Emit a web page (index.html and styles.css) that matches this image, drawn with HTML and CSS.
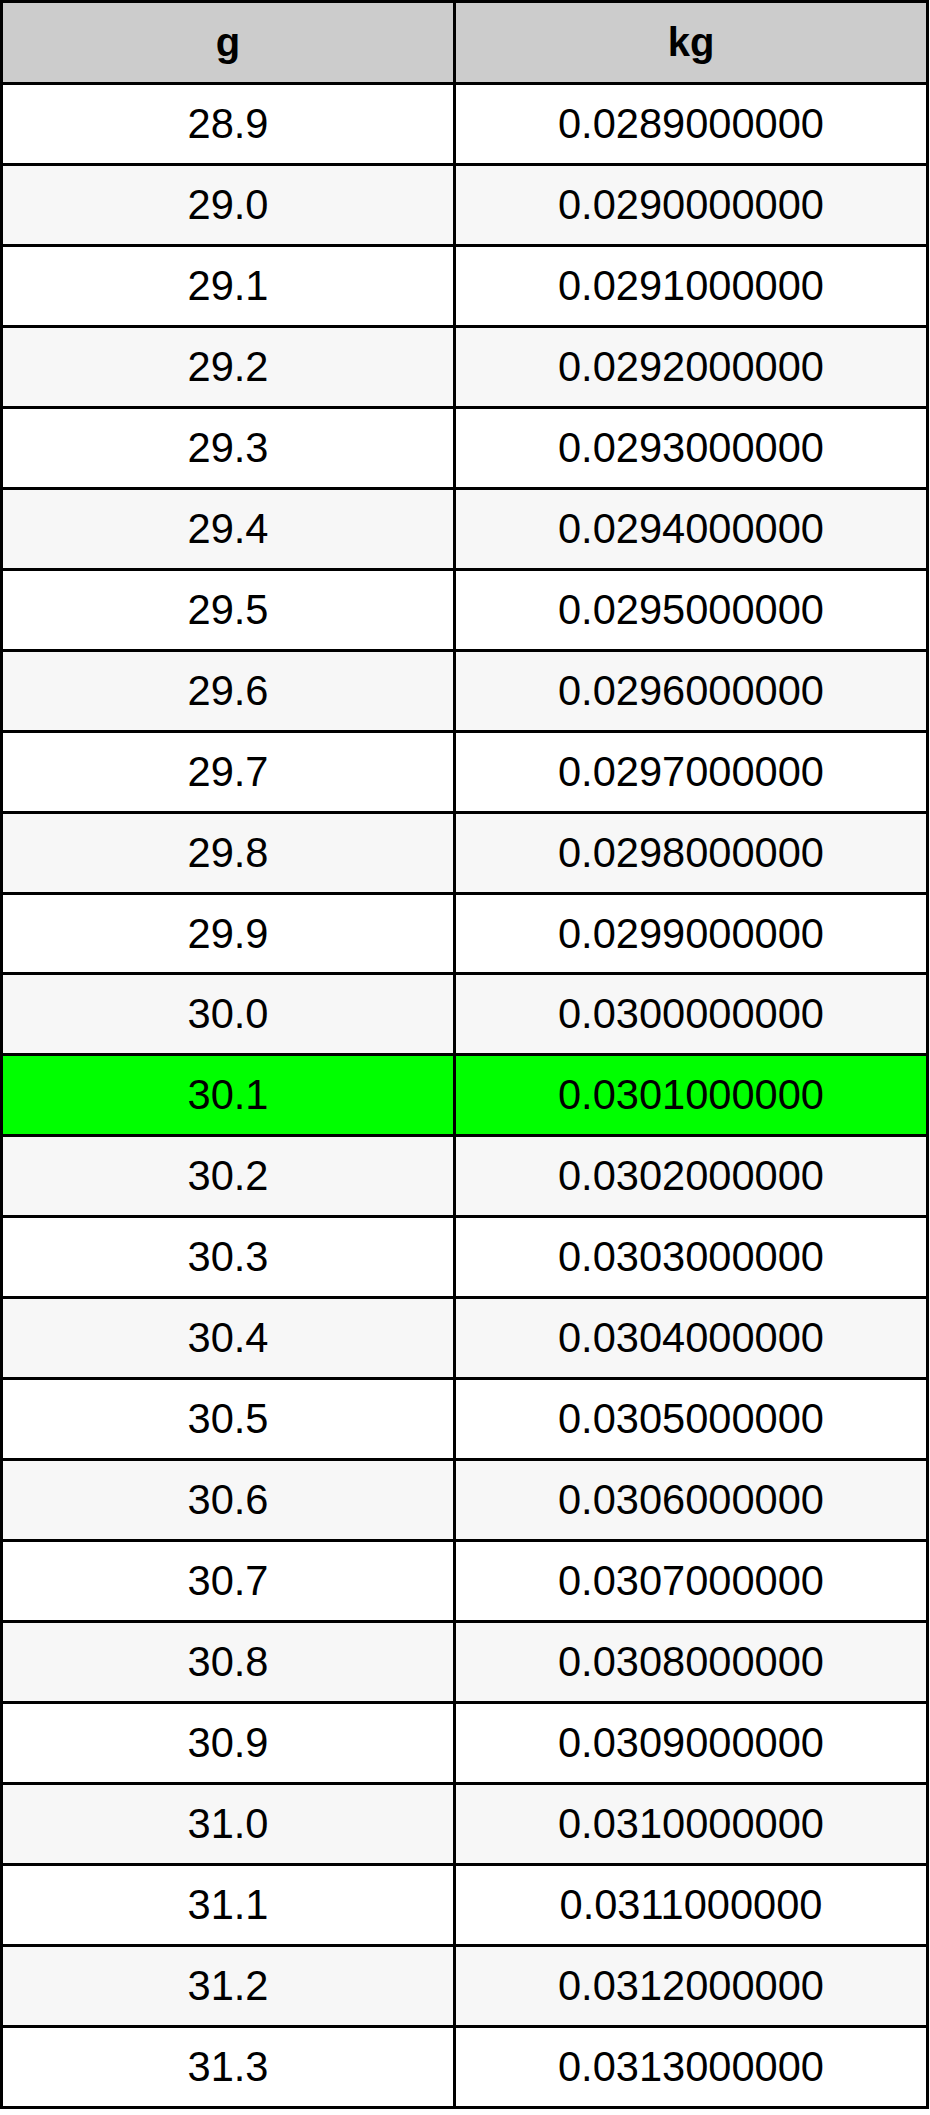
FILE: index.html
```html
<!DOCTYPE html>
<html>
<head>
<meta charset="utf-8">
<title>g to kg</title>
<link rel="stylesheet" href="styles.css">
</head>
<body>
<table class="conv">
  <thead>
    <tr class="head"><th class="c1">g</th><th class="c2">kg</th></tr>
  </thead>
  <tbody>
    <tr><td>28.9</td><td>0.0289000000</td></tr>
    <tr class="alt"><td>29.0</td><td>0.0290000000</td></tr>
    <tr><td>29.1</td><td>0.0291000000</td></tr>
    <tr class="alt"><td>29.2</td><td>0.0292000000</td></tr>
    <tr><td>29.3</td><td>0.0293000000</td></tr>
    <tr class="alt"><td>29.4</td><td>0.0294000000</td></tr>
    <tr><td>29.5</td><td>0.0295000000</td></tr>
    <tr class="alt"><td>29.6</td><td>0.0296000000</td></tr>
    <tr><td>29.7</td><td>0.0297000000</td></tr>
    <tr class="alt"><td>29.8</td><td>0.0298000000</td></tr>
    <tr><td>29.9</td><td>0.0299000000</td></tr>
    <tr class="alt"><td>30.0</td><td>0.0300000000</td></tr>
    <tr class="hl"><td>30.1</td><td>0.0301000000</td></tr>
    <tr class="alt"><td>30.2</td><td>0.0302000000</td></tr>
    <tr><td>30.3</td><td>0.0303000000</td></tr>
    <tr class="alt"><td>30.4</td><td>0.0304000000</td></tr>
    <tr><td>30.5</td><td>0.0305000000</td></tr>
    <tr class="alt"><td>30.6</td><td>0.0306000000</td></tr>
    <tr><td>30.7</td><td>0.0307000000</td></tr>
    <tr class="alt"><td>30.8</td><td>0.0308000000</td></tr>
    <tr><td>30.9</td><td>0.0309000000</td></tr>
    <tr class="alt"><td>31.0</td><td>0.0310000000</td></tr>
    <tr><td>31.1</td><td>0.0311000000</td></tr>
    <tr class="alt"><td>31.2</td><td>0.0312000000</td></tr>
    <tr><td>31.3</td><td>0.0313000000</td></tr>
  </tbody>
</table>
</body>
</html>
```
FILE: styles.css
```css
html, body {
  margin: 0;
  padding: 0;
  background: #ffffff;
}

.conv {
  border-collapse: separate;
  border-spacing: 0;
  table-layout: fixed;
  width: 929px;
  border-top: 3px solid #000;
  border-left: 3px solid #000;
  font-family: "Liberation Sans", Arial, sans-serif;
  color: #000;
}

.conv th,
.conv td {
  box-sizing: border-box;
  padding: 0;
  text-align: center;
  vertical-align: middle;
  border-right: 3px solid #000;
  border-bottom: 3px solid #000;
}

.conv .c1 { width: 453px; }
.conv .c2 { width: 473px; }

.head {
  height: 82px;
  background: #cccccc;
}

.head th {
  font-size: 40px;
  font-weight: bold;
}

.conv tbody tr {
  height: 80.96px;
  background: #ffffff;
}

.conv td {
  font-size: 41.6px;
  font-weight: normal;
}

.conv tbody tr.alt {
  background: #f7f7f7;
}

.conv tbody tr.hl {
  background: #00ff00;
}
```
